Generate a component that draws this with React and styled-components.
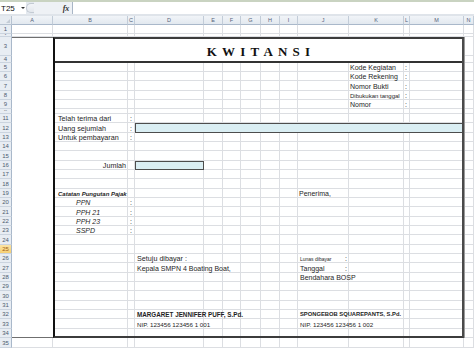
import React from 'react';
import styled, { createGlobalStyle } from 'styled-components';

const LETTERS = 'ABCDEFGHIJKLMN';
const COL_WIDTHS = [41, 75, 7, 69, 19, 18, 20, 19, 18, 51, 55, 6, 54, 10];
const ROW_HEIGHTS = [
  9, 3, 19, 7,
  9, 9, 10, 9, 9,
  5,
  9, 10, 9, 9, 10, 9, 9, 10, 9, 9, 10, 9, 9, 10, 9, 9, 10, 9, 9, 10, 9, 9, 10, 9,
  10,
];
const ACTIVE_ROW = 25;

const col = (letter) => LETTERS.indexOf(letter) + 2;

const LABELS = [
  { r: 5, c: 'K', text: 'Kode Kegiatan', pl: 1 },
  { r: 5, c: 'L', text: ':', pl: 1 },
  { r: 6, c: 'K', text: 'Kode Rekening', pl: 1 },
  { r: 6, c: 'L', text: ':', pl: 1 },
  { r: 7, c: 'K', text: 'Nomor Bukti', pl: 1 },
  { r: 7, c: 'L', text: ':', pl: 1 },
  { r: 8, c: 'K', text: 'Dibukukan tanggal', pl: 1, size: 6 },
  { r: 8, c: 'L', text: ':', pl: 1 },
  { r: 9, c: 'K', text: 'Nomor', pl: 1 },
  { r: 9, c: 'L', text: ':', pl: 1 },
  { r: 11, c: 'B', text: 'Telah terima dari', pl: 5, size: 7.2 },
  { r: 11, c: 'C', text: ':', pl: 2 },
  { r: 12, c: 'B', text: 'Uang sejumlah', pl: 5, size: 7.2 },
  { r: 12, c: 'C', text: ':', pl: 2 },
  { r: 13, c: 'B', text: 'Untuk pembayaran', pl: 5, size: 7.2 },
  { r: 13, c: 'C', text: ':', pl: 2 },
  { r: 16, c: 'B', text: 'Jumlah', align: 'right', pr: 2, size: 7.2 },
  { r: 19, c: 'B', text: 'Catatan Pungutan Pajak', pl: 5, size: 6, bold: true, italic: true },
  { r: 19, c: 'J', text: 'Penerima,', pl: 1 },
  { r: 20, c: 'B', text: 'PPN', pl: 23, italic: true },
  { r: 20, c: 'C', text: ':', pl: 2 },
  { r: 21, c: 'B', text: 'PPH 21', pl: 23, italic: true },
  { r: 21, c: 'C', text: ':', pl: 2 },
  { r: 22, c: 'B', text: 'PPH 23', pl: 23, italic: true },
  { r: 22, c: 'C', text: ':', pl: 2 },
  { r: 23, c: 'B', text: 'SSPD', pl: 23, italic: true },
  { r: 23, c: 'C', text: ':', pl: 2 },
  { r: 26, c: 'D', text: 'Setuju dibayar :', pl: 2, size: 7.2 },
  { r: 26, c: 'J', text: 'Lunas dibayar', pl: 2, size: 5 },
  { r: 26, c: 'J', text: ':', align: 'right', pr: 2 },
  { r: 27, c: 'D', text: 'Kepala SMPN 4 Boating Boat,', pl: 2 },
  { r: 27, c: 'J', text: 'Tanggal', pl: 2 },
  { r: 27, c: 'J', text: ':', align: 'right', pr: 2 },
  { r: 28, c: 'J', text: 'Bendahara BOSP', pl: 2 },
  { r: 32, c: 'D', text: 'MARGARET JENNIFER PUFF, S.Pd.', pl: 2, size: 6.3, bold: true },
  { r: 32, c: 'J', text: 'SPONGEBOB SQUAREPANTS, S.Pd.', pl: 2, size: 5.8, bold: true },
  { r: 33, c: 'D', text: 'NIP. 123456 123456 1 001', pl: 2, size: 6.2 },
  { r: 33, c: 'J', text: 'NIP. 123456 123456 1 002', pl: 2, size: 6.2 },
];

const GlobalStyle = createGlobalStyle`
  html, body {
    margin: 0;
    padding: 0;
    background: #fff;
  }
  body {
    width: 474px;
    height: 348px;
    overflow: hidden;
    font-family: 'Liberation Sans', Arial, sans-serif;
  }
  * {
    box-sizing: border-box;
  }
`;

const Window = styled.div`
  width: 474px;
  height: 348px;
  display: flex;
  flex-direction: column;
  background: #fff;
`;

const FormulaBar = styled.div`
  height: 16px;
  display: flex;
  align-items: stretch;
  background: #e4e9ef;
  border-top: 2px solid #c9d3c1;
  border-bottom: 2px solid #dfe4ea;
`;

const NameBox = styled.div`
  width: 20px;
  background: #fff;
  font-size: 8px;
  color: #111;
  display: flex;
  align-items: center;
  padding-left: 1px;
`;

const DropArrow = styled.div`
  width: 6px;
  background: #fff;
  display: flex;
  align-items: center;
  justify-content: center;
  &::after {
    content: '';
    border-left: 2px solid transparent;
    border-right: 2px solid transparent;
    border-top: 2px solid #333;
  }
`;

const Pill = styled.div`
  width: 8px;
  margin: 1px 0;
  border: 1px solid #c3cad3;
  border-right: none;
  border-radius: 6px 0 0 6px;
  background: linear-gradient(#f3f5f8, #e3e7ec);
`;

const Gap = styled.div`
  flex: 0 0 26px;
  background: #eef1f5;
`;

const FxLabel = styled.div`
  width: 12px;
  background: #eef1f5;
  font-family: 'Liberation Serif', serif;
  font-style: italic;
  font-weight: 700;
  font-size: 8px;
  color: #333;
  display: flex;
  align-items: center;
  justify-content: center;
`;

const FormulaInput = styled.div`
  flex: 1;
  background: #fff;
  border-left: 1px solid #a9b6c6;
`;

const Sheet = styled.div`
  display: grid;
  grid-template-columns: 12px ${COL_WIDTHS.map((w) => `${w}px`).join(' ')};
  grid-template-rows: 9px ${ROW_HEIGHTS.map((h) => `${h}px`).join(' ')};
  overflow: hidden;
`;

const Corner = styled.div`
  grid-row: 1;
  grid-column: 1;
  background: #e6ebf1;
  border-right: 1px solid #b7c3d1;
  border-bottom: 1px solid #b7c3d1;
  position: relative;
  &::after {
    content: '';
    position: absolute;
    right: 1px;
    bottom: 1px;
    border-left: 4px solid transparent;
    border-bottom: 4px solid #c4ccd6;
  }
`;

const ColHead = styled.div`
  grid-row: 1;
  grid-column: ${(p) => p.$c};
  background: linear-gradient(#f1f4f8, #e2e8ef);
  border-right: 1px solid #c2ccd8;
  border-bottom: 1px solid #a9b8ca;
  font-size: 5.5px;
  color: #55627a;
  display: flex;
  align-items: center;
  justify-content: center;
`;

const RowHead = styled.div`
  grid-row: ${(p) => p.$r};
  grid-column: 1;
  background: ${(p) => (p.$active ? 'linear-gradient(#fbe3a3, #f6cf73)' : '#e8edf3')};
  border-right: 1px solid #a9b8ca;
  border-bottom: 1px solid #cbd4df;
  font-size: ${(p) => (p.$tiny ? 2.5 : 6)}px;
  color: ${(p) => (p.$active ? '#a0601a' : '#4e5b70')};
  display: flex;
  align-items: center;
  justify-content: center;
  overflow: hidden;
  line-height: 1;
`;

const Cell = styled.div`
  grid-row: ${(p) => p.$r};
  grid-column: ${(p) => p.$c};
  border-right: 1px solid #dcdee2;
  border-bottom: 1px solid #dcdee2;
  background: #fff;
`;

const MarginBlock = styled.div`
  grid-row: 4 / 36;
  grid-column: 2 / 3;
  background: #fff;
  border-top: 1px solid #6f6f6f;
  border-bottom: 1px solid #6f6f6f;
`;

const TitleBlock = styled.div`
  grid-row: 4 / 6;
  grid-column: 3 / 15;
  background: #fff;
  border-bottom: 2px solid #333;
  display: flex;
  align-items: flex-end;
  justify-content: center;
  padding-bottom: 3px;
`;

const Title = styled.div`
  font-family: 'Liberation Serif', 'Times New Roman', serif;
  font-weight: 700;
  font-size: 13px;
  line-height: 13px;
  letter-spacing: 5.2px;
  padding-left: 5px;
  color: #111;
`;

const Field = styled.div`
  grid-row: ${(p) => p.$r};
  grid-column: ${(p) => p.$from} / ${(p) => p.$to};
  background: #daeef3;
  border: 1px solid #4d4d4d;
`;

const Frame = styled.div`
  grid-row: 4 / 36;
  grid-column: 3 / 15;
  border-left: 2px solid #111;
  border-top: 2px solid #3c3c3c;
  border-bottom: 2px solid #3c3c3c;
  border-right: 2px solid #4a4a4a;
  box-shadow: 1px 0 0 #9a9a9a;
  pointer-events: none;
  z-index: 2;
`;

const Text = styled.div`
  grid-row: ${(p) => p.$r};
  grid-column: ${(p) => p.$c};
  z-index: 1;
  display: flex;
  align-items: flex-end;
  justify-content: ${(p) => (p.$align === 'right' ? 'flex-end' : 'flex-start')};
  padding: 0 ${(p) => p.$pr || 0}px 1px ${(p) => p.$pl || 0}px;
  font-size: ${(p) => p.$size || 7}px;
  font-weight: ${(p) => (p.$bold ? 700 : 400)};
  font-style: ${(p) => (p.$italic ? 'italic' : 'normal')};
  line-height: 1;
  white-space: nowrap;
  color: #1e1e1e;
`;

const App = () => {
  const cells = [];
  ROW_HEIGHTS.forEach((_, i) => {
    const r = i + 2;
    for (let c = 2; c <= LETTERS.length + 1; c += 1) {
      cells.push(<Cell key={`${r}-${c}`} $r={r} $c={c} />);
    }
  });

  return (
    <Window>
      <GlobalStyle />
      <FormulaBar>
        <NameBox>T25</NameBox>
        <DropArrow />
        <Pill />
        <Gap />
        <FxLabel>fx</FxLabel>
        <FormulaInput />
      </FormulaBar>
      <Sheet>
        <Corner />
        {LETTERS.split('').map((letter) => (
          <ColHead key={letter} $c={col(letter)}>{letter}</ColHead>
        ))}
        {ROW_HEIGHTS.map((h, i) => (
          <RowHead key={i} $r={i + 2} $tiny={h < 6} $active={i + 1 === ACTIVE_ROW}>
            {i + 1}
          </RowHead>
        ))}
        {cells}
        <MarginBlock />
        <TitleBlock>
          <Title>KWITANSI</Title>
        </TitleBlock>
        <Field $r={13} $from={col('D')} $to={col('N')} />
        <Field $r={17} $from={col('D')} $to={col('E')} />
        {LABELS.map((l, i) => (
          <Text
            key={i}
            $r={l.r + 1}
            $c={col(l.c)}
            $pl={l.pl}
            $pr={l.pr}
            $align={l.align}
            $size={l.size}
            $bold={l.bold}
            $italic={l.italic}
          >
            {l.text}
          </Text>
        ))}
        <Frame />
      </Sheet>
    </Window>
  );
};

export default App;
